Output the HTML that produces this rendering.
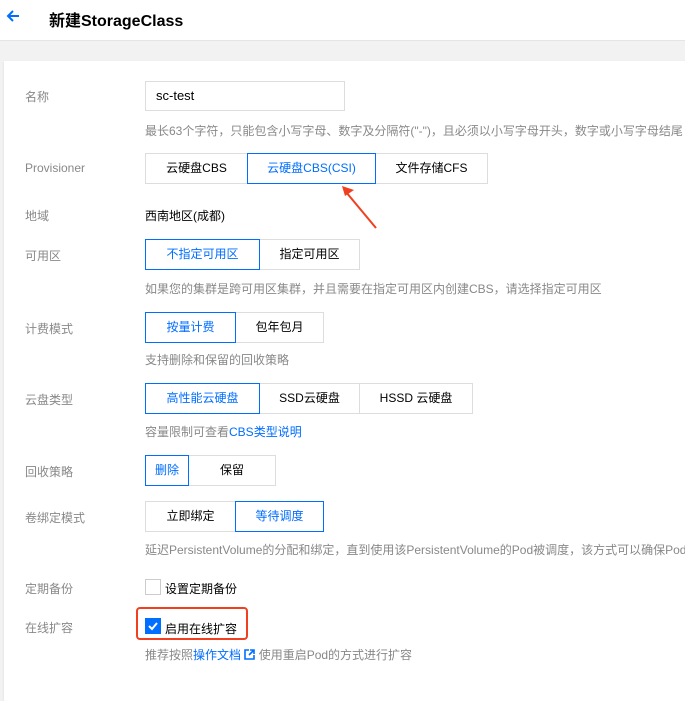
<!DOCTYPE html>
<html><head><meta charset="utf-8"><style>
*{margin:0;padding:0;box-sizing:border-box}
body{width:685px;height:679px;overflow:hidden;background:#f2f2f2;font-family:"Liberation Sans","Noto Sans CJK SC",sans-serif;font-size:12px;color:#000;position:relative}
.hdr{position:absolute;left:0;top:0;width:685px;height:41px;background:#fff;border-bottom:1px solid #e5e5e5}
.card{position:absolute;left:4px;top:61px;width:700px;height:640px;background:#fff;box-shadow:0 1px 2px rgba(0,0,0,.1)}
.a{position:absolute;white-space:nowrap}
.lbl{position:absolute;left:25px;color:#888;font-size:12px}
.help{position:absolute;left:145px;color:#888;font-size:12px;white-space:nowrap}
.g{position:absolute;display:flex;height:31px}
.g div{border:1px solid #ddd;height:31px;line-height:29px;text-align:center;font-size:12px;color:#000;margin-left:-1px;background:#fff}
.g div:first-child{margin-left:0}
.g div.s{border-color:#006eff;color:#006eff;position:relative;z-index:1}
.cb{position:absolute;width:16px;height:16px;border:1px solid #ccc;background:#fff}
</style></head><body>
<div class="hdr">
<svg class="a" style="left:5px;top:8px" width="16" height="16" viewBox="0 0 16 16"><path d="M14 8H3M8 3L3 8l5 5" stroke="#006eff" stroke-width="2" fill="none"/></svg>
<div class="a" style="left:49px;top:7px;font-size:16px;font-weight:bold;color:#000">新建StorageClass</div>
</div>
<div class="card"></div>
<div class="lbl" style="top:88px">名称</div>
<div class="a" style="left:145px;top:81px;width:200px;height:30px;border:1px solid #ddd;padding:6px 0 0 10px;font-size:13px">sc-test</div>
<div class="help" style="top:122px">最长63个字符，只能包含小写字母、数字及分隔符("-")，且必须以小写字母开头，数字或小写字母结尾</div>
<div class="lbl" style="top:161px">Provisioner</div>
<div class="g" style="left:145px;top:153px"><div style="width:103px">云硬盘CBS</div><div class="s" style="width:129px">云硬盘CBS(CSI)</div><div style="width:113px">文件存储CFS</div></div>
<svg class="a" style="left:336px;top:182px" width="45" height="50"><path d="M40 46L10 10" stroke="#f0401f" stroke-width="2"/><path d="M6 4l12 4-9 6z" fill="#f0401f"/></svg>
<div class="lbl" style="top:207px">地域</div>
<div class="a" style="left:145px;top:207px">西南地区(成都)</div>
<div class="lbl" style="top:247px">可用区</div>
<div class="g" style="left:145px;top:239px"><div class="s" style="width:115px">不指定可用区</div><div style="width:101px">指定可用区</div></div>
<div class="help" style="top:280px">如果您的集群是跨可用区集群，并且需要在指定可用区内创建CBS，请选择指定可用区</div>
<div class="lbl" style="top:320px">计费模式</div>
<div class="g" style="left:145px;top:312px"><div class="s" style="width:91px">按量计费</div><div style="width:89px">包年包月</div></div>
<div class="help" style="top:351px">支持删除和保留的回收策略</div>
<div class="lbl" style="top:391px">云盘类型</div>
<div class="g" style="left:145px;top:383px"><div class="s" style="width:115px">高性能云硬盘</div><div style="width:101px">SSD云硬盘</div><div style="width:114px">HSSD 云硬盘</div></div>
<div class="help" style="top:423px">容量限制可查看<span style="color:#006eff">CBS类型说明</span></div>
<div class="lbl" style="top:463px">回收策略</div>
<div class="g" style="left:145px;top:455px"><div class="s" style="width:44px">删除</div><div style="width:88px">保留</div></div>
<div class="lbl" style="top:509px">卷绑定模式</div>
<div class="g" style="left:145px;top:501px"><div style="width:91px">立即绑定</div><div class="s" style="width:89px">等待调度</div></div>
<div class="help" style="top:541px">延迟PersistentVolume的分配和绑定，直到使用该PersistentVolume的Pod被调度，该方式可以确保Pod</div>
<div class="lbl" style="top:580px">定期备份</div>
<div class="cb" style="left:145px;top:579px"></div>
<div class="a" style="left:165px;top:580px">设置定期备份</div>
<div class="lbl" style="top:619px">在线扩容</div>
<div class="a" style="left:136px;top:607px;width:112px;height:33px;border:2px solid #f0401f;border-radius:4px"></div>
<div class="cb" style="left:145px;top:618px;background:#006eff;border-color:#006eff"><svg width="14" height="14" viewBox="0 0 14 14" style="position:absolute;left:0;top:0"><path d="M3 7l3 3 5-6" stroke="#fff" stroke-width="2" fill="none"/></svg></div>
<div class="a" style="left:165px;top:620px">启用在线扩容</div>
<div class="help" style="top:646px">推荐按照<span style="color:#006eff">操作文档 <svg width="11" height="11" viewBox="0 0 11 11" style="vertical-align:-1px"><path d="M5 1H1v9h9V6M6 1h4v4M10 1L5 6" stroke="#006eff" stroke-width="1.6" fill="none"/></svg></span> 使用重启Pod的方式进行扩容</div>
</body></html>
